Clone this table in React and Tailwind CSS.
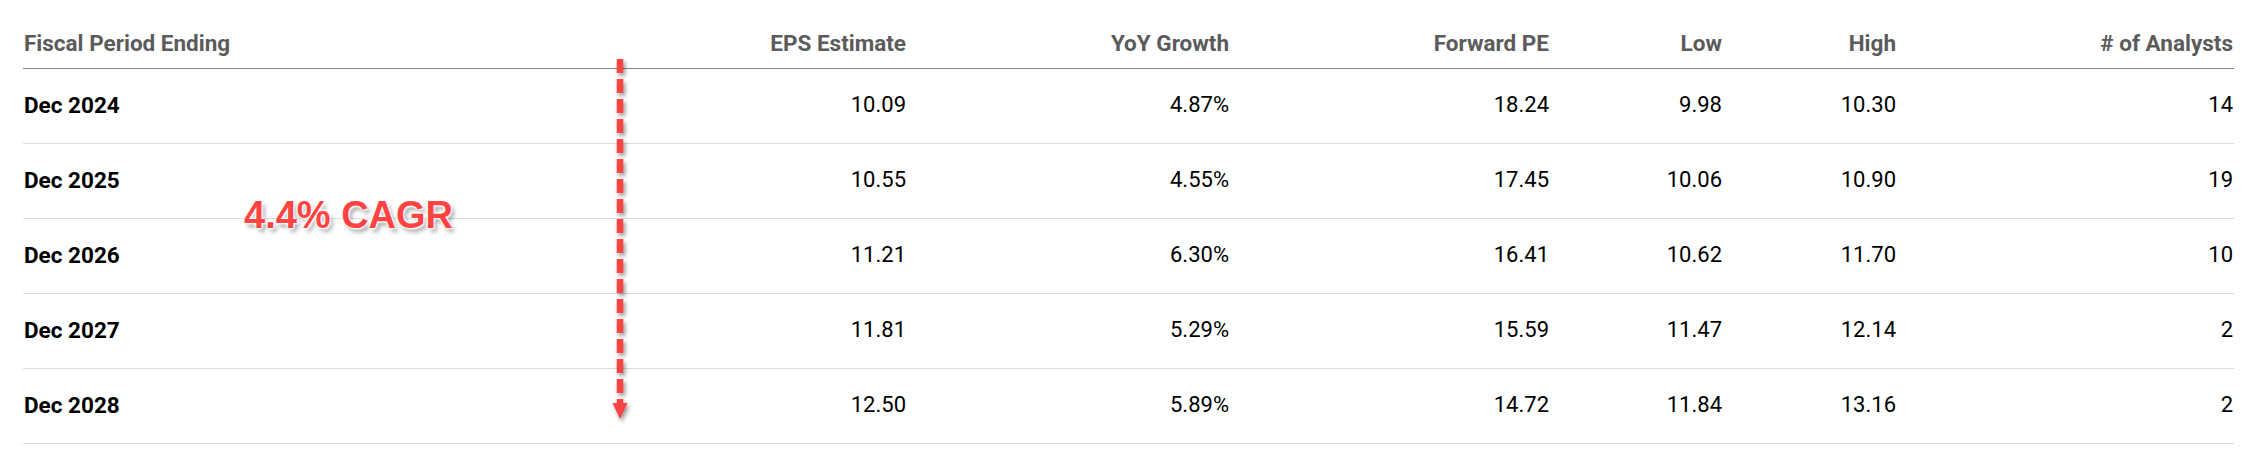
const headers = [
    { label: 'Fiscal Period Ending', align: 'text-left pl-px' },
    { label: 'EPS Estimate', align: 'text-right' },
    { label: 'YoY Growth', align: 'text-right' },
    { label: 'Forward PE', align: 'text-right' },
    { label: 'Low', align: 'text-right' },
    { label: 'High', align: 'text-right' },
    { label: '# of Analysts', align: 'text-right pr-px' },
];

const rows = [
    ['Dec 2024', '10.09', '4.87%', '18.24', '9.98', '10.30', '14'],
    ['Dec 2025', '10.55', '4.55%', '17.45', '10.06', '10.90', '19'],
    ['Dec 2026', '11.21', '6.30%', '16.41', '10.62', '11.70', '10'],
    ['Dec 2027', '11.81', '5.29%', '15.59', '11.47', '12.14', '2'],
    ['Dec 2028', '12.50', '5.89%', '14.72', '11.84', '13.16', '2'],
];

const cols = 'grid grid-cols-[677px_206px_323px_320px_173px_174px_338px]';

const App = () => {
    return (
        <div className="relative w-full h-[451px] bg-white font-['Roboto',sans-serif] overflow-hidden">
            <div className="ml-[23px] w-[2211px]">
                {/* Header */}
                <div className={`${cols} h-[69px] items-end pb-[12px] border-b border-[#80868b] text-[22.5px] leading-[26px] font-bold text-[#5b5b5b]`}>
                    {headers.map((h) => (
                        <div key={h.label} className={h.align}>{h.label}</div>
                    ))}
                </div>

                {/* Rows */}
                {rows.map((r) => (
                    <div
                        key={r[0]}
                        className={`${cols} h-[75px] items-center pb-[3px] border-b border-[#dadada] text-[22px] leading-[26px] text-black`}
                    >
                        <div className="pl-px font-bold text-[22.5px]">{r[0]}</div>
                        <div className="text-right">{r[1]}</div>
                        <div className="text-right">{r[2]}</div>
                        <div className="text-right">{r[3]}</div>
                        <div className="text-right">{r[4]}</div>
                        <div className="text-right">{r[5]}</div>
                        <div className="text-right pr-px">{r[6]}</div>
                    </div>
                ))}
            </div>

            {/* Dashed arrow overlay */}
            <svg
                className="absolute left-[611px] top-[57px] drop-shadow-[2px_3px_2px_rgba(0,0,0,0.4)]"
                width="18"
                height="366"
                viewBox="0 0 18 366"
            >
                <line x1="9" y1="2" x2="9" y2="348" stroke="#ff4242" strokeWidth="6.5" strokeDasharray="14 6" />
                <polygon points="1.5,346 16.5,346 9,362" fill="#ff4242" />
            </svg>

            {/* CAGR label */}
            <div className="absolute left-[244px] top-[194px] font-['Liberation_Sans',Arial,sans-serif] font-bold text-[38px] leading-[42px] text-[#ff4343] [text-shadow:0_0_2px_#fff,0_0_3px_#fff,1px_1px_2px_#fff,-1px_-1px_2px_#fff,3px_4px_4px_rgba(0,0,0,0.35)]">
                4.4% CAGR
            </div>
        </div>
    );
};

export default App;
